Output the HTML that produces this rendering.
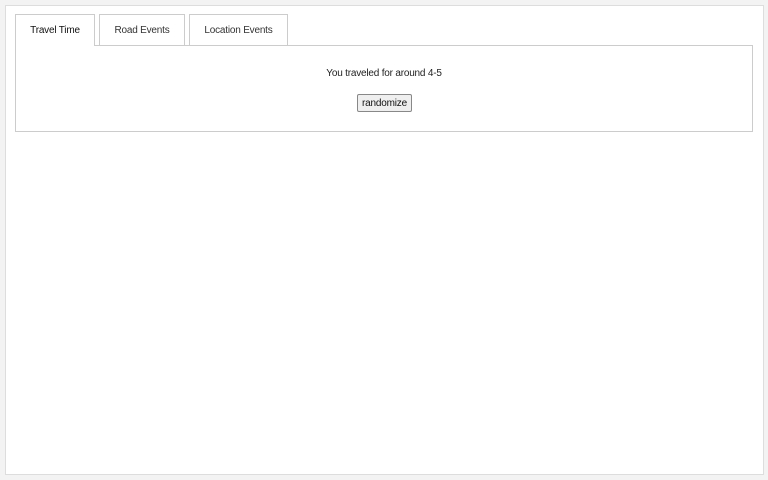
<!DOCTYPE html>
<html><head><style>
body{margin:0;background:#f3f3f3;width:768px;height:480px;font-family:"Liberation Sans",sans-serif;font-size:10px;letter-spacing:-0.2px;color:#222;position:relative}
.panel{position:absolute;left:5px;top:5px;width:757px;height:468px;background:#fff;border:1px solid #ddd}
.tab{position:absolute;top:14px;height:31px;border:1px solid #ccc;border-bottom:none;background:#fff;box-sizing:border-box;text-align:center;line-height:32px;color:#333}
.content{position:absolute;left:15px;top:45px;width:736px;height:85px;border:1px solid #ccc}
.txt{position:absolute;left:0;right:0;top:22px;text-align:center}
.btn{position:absolute;left:341px;top:48px;width:55px;height:18px;box-sizing:border-box;border:1px solid #888;border-radius:2px;background:#efefef;text-align:center;line-height:17px;color:#111}
</style></head><body>
<div class="panel"></div>
<div class="content"><div class="txt">You traveled for around 4-5</div><div class="btn">randomize</div></div>
<div class="tab" style="left:15px;width:80px;height:32px;color:#111">Travel Time</div>
<div class="tab" style="left:99px;width:86px;border-bottom:1px solid #ccc;height:32px">Road Events</div>
<div class="tab" style="left:189px;width:99px;border-bottom:1px solid #ccc;height:32px">Location Events</div>
</body></html>
